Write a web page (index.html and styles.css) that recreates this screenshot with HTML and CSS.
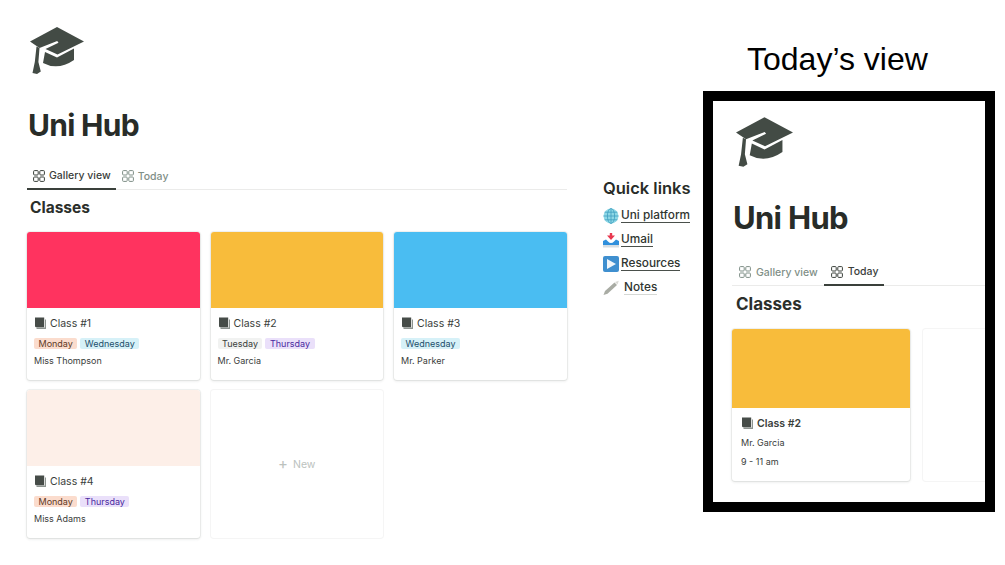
FILE: index.html
```html
<!DOCTYPE html>
<html lang="en">
	<head>
		<meta charset="UTF-8" />
		<title>Uni Hub</title>
		<link rel="stylesheet" href="styles.css">
	</head>
	<body>
		<svg class="defs" width="0" height="0">
			<symbol id="cap" viewBox="0 0 54 47">
				<path d="M27 0L54 14.5 27.5 27.5 15.5 22 28.5 15.8 27.2 14 9.5 21 0 14.5Z" />
				<path d="M15 25L27 30.5 44 21.5V33Q28 44 13 36Z" />
				<path d="M6.5 19.5L9.5 21 8.4 35 10.8 44.5 7 47 2.5 46 4.8 35Z" />
			</symbol>
			<symbol id="grid" viewBox="0 0 12 12">
				<rect x="0.6" y="0.6" width="4.6" height="4.4" rx="0.9" />
				<rect x="6.8" y="0.6" width="4.6" height="4.4" rx="0.9" />
				<rect x="0.6" y="7" width="4.6" height="4.4" rx="0.9" />
				<rect x="6.8" y="7" width="4.6" height="4.4" rx="0.9" />
			</symbol>
			<symbol id="book" viewBox="0 0 12 12">
				<path d="M2.5 10.5H11V2.5H12V12H2.5Z" fill="#8d9490" />
				<path d="M1 .5H10.2V10.2H2.2Q1 10.2 1 9Z" fill="#464c48" />
			</symbol>
		</svg>

		<div class="slide">
			<!-- Gallery page -->
			<main class="page">
				<svg class="cap"><use href="#cap" /></svg>
				<h1>Uni Hub</h1>
				<div class="tabs">
					<div class="tab active"><svg class="grid"><use href="#grid" /></svg>Gallery view</div>
					<div class="tab"><svg class="grid"><use href="#grid" /></svg>Today</div>
				</div>
				<h2>Classes</h2>
				<div class="gallery">
					<div class="card">
						<div class="cover red"></div>
						<div class="card-body">
							<div class="card-title"><svg class="book"><use href="#book" /></svg>Class #1</div>
							<div class="tags"><span class="tag orange">Monday</span><span class="tag blue">Wednesday</span></div>
							<div class="teacher">Miss Thompson</div>
						</div>
					</div>
					<div class="card">
						<div class="cover yellow"></div>
						<div class="card-body">
							<div class="card-title"><svg class="book"><use href="#book" /></svg>Class #2</div>
							<div class="tags"><span class="tag grey">Tuesday</span><span class="tag purple">Thursday</span></div>
							<div class="teacher">Mr. Garcia</div>
						</div>
					</div>
					<div class="card">
						<div class="cover sky"></div>
						<div class="card-body">
							<div class="card-title"><svg class="book"><use href="#book" /></svg>Class #3</div>
							<div class="tags"><span class="tag blue">Wednesday</span></div>
							<div class="teacher">Mr. Parker</div>
						</div>
					</div>
					<div class="card">
						<div class="cover peach"></div>
						<div class="card-body">
							<div class="card-title"><svg class="book"><use href="#book" /></svg>Class #4</div>
							<div class="tags"><span class="tag orange">Monday</span><span class="tag purple">Thursday</span></div>
							<div class="teacher">Miss Adams</div>
						</div>
					</div>
					<div class="card new"><span class="plus">+</span> New</div>
				</div>
			</main>

			<!-- Quick links -->
			<aside class="links">
				<h3>Quick links</h3>
				<div class="link">
					<svg class="emoji" viewBox="0 0 16 16">
						<circle cx="8" cy="8" r="7.5" fill="#8fd8e6" />
						<g fill="none" stroke="#3f9fc0" stroke-width=".8">
							<ellipse cx="8" cy="8" rx="3.6" ry="7.5" />
							<path d="M8 .5V15.5M.5 8H15.5M1.6 4.2H14.4M1.6 11.8H14.4" />
						</g>
					</svg>
					<span>Uni platform</span>
				</div>
				<div class="link">
					<svg class="emoji" viewBox="0 0 16 16">
						<path d="M0 9L3 7.5 5 9.5Q8 12.5 11 9.5L13 7.5 16 9V13H0Z" fill="#2f8fdc" />
						<path d="M0 13H16V15.5H0Z" fill="#d5dde3" />
						<path d="M6.8 1H9.2V3.5H12L8 8 4 3.5H6.8Z" fill="#e8384f" />
					</svg>
					<span>Umail</span>
				</div>
				<div class="link">
					<svg class="emoji" viewBox="0 0 16 16">
						<rect width="16" height="16" rx="2" fill="#3f8fcf" />
						<path d="M4 3L13 8 4 13Z" fill="#f1f6fa" />
					</svg>
					<span>Resources</span>
				</div>
				<div class="link notes">
					<svg class="emoji" viewBox="0 0 16 16">
						<path d="M.5 15L2 11 11.5 2.5 14 5 4.5 13.8Z" fill="#a9aca4" />
						<path d="M12 2L14.5 4.5 15.8 .8Z" fill="#d9d9d4" />
					</svg>
					<span>Notes</span>
				</div>
			</aside>

			<!-- Today's view -->
			<section class="today">
				<div class="today-label">Today’s view</div>
				<div class="frame">
					<svg class="cap"><use href="#cap" /></svg>
					<h1>Uni Hub</h1>
					<div class="tabs">
						<div class="tab"><svg class="grid"><use href="#grid" /></svg>Gallery view</div>
						<div class="tab active"><svg class="grid"><use href="#grid" /></svg>Today</div>
					</div>
					<h2>Classes</h2>
					<div class="today-cards">
						<div class="card">
							<div class="cover yellow"></div>
							<div class="card-body">
								<div class="card-title"><svg class="book"><use href="#book" /></svg>Class #2</div>
								<div class="teacher">Mr. Garcia</div>
								<div class="teacher">9 - 11 am</div>
							</div>
						</div>
						<div class="card blank"></div>
					</div>
				</div>
			</section>
		</div>
	</body>
</html>
```

FILE: styles.css
```css
html,
body {
	margin: 0;
	background: #fff;
}
body {
	width: 1005px;
	height: 565px;
	overflow: hidden;
	font-family: Inter, "Noto Sans", sans-serif;
	color: #2b2f2b;
}
.defs {
	position: absolute;
}
.slide {
	display: flex;
}

/* Gallery page */
.page {
	width: 540px;
	margin-left: 27px;
	padding-top: 27px;
}
.cap {
	display: block;
	width: 54px;
	height: 47px;
	margin-left: 3px;
	fill: #434b45;
}
h1 {
	margin: 32px 0 0 1px;
	font-size: 30px;
	line-height: 38px;
	font-weight: 700;
	letter-spacing: -0.7px;
	color: #282c28;
}
.tabs {
	display: flex;
	height: 26px;
	margin-top: 19px;
	border-bottom: 1px solid #ebebea;
}
.tab {
	display: flex;
	align-items: center;
	gap: 4px;
	height: 26px;
	padding: 0 5px 0 6px;
	font-size: 10.5px;
	font-weight: 500;
	color: #7f8f87;
}
.tab.active {
	height: 25px;
	border-bottom: 2px solid #3a403b;
	color: #3a403b;
}
.grid {
	width: 12px;
	height: 12px;
	fill: none;
	stroke: currentColor;
	stroke-width: 1;
}
h2 {
	margin: 7px 0 0 3px;
	font-size: 15.5px;
	line-height: 22px;
	font-weight: 700;
	color: #2b2f2b;
}
.gallery {
	display: grid;
	grid-template-columns: repeat(3, 172.5px);
	grid-auto-rows: 148px;
	gap: 10px 11px;
	margin-top: 13px;
}
.card {
	display: flex;
	flex-direction: column;
	background: #fff;
	border-radius: 3px;
	overflow: hidden;
	box-shadow: 0 0 0 1px rgba(50, 60, 55, 0.06), 0 1px 3px rgba(50, 60, 55, 0.14);
}
.cover {
	height: 76px;
	flex-shrink: 0;
}
.red {
	background: #ff335f;
}
.yellow {
	background: #f8bc3b;
}
.sky {
	background: #4abdf2;
}
.peach {
	background: #fdefe8;
}
.card-body {
	padding: 8px 7px 0;
}
.card-title {
	display: flex;
	align-items: center;
	gap: 4px;
	height: 14px;
	font-size: 10.5px;
	color: #3a403b;
}
.book {
	width: 12px;
	height: 12px;
}
.tags {
	display: flex;
	gap: 3px;
	margin-top: 8px;
}
.tag {
	padding: 0 4.5px;
	border-radius: 2px;
	font-size: 9px;
	line-height: 11px;
}
.orange {
	background: #fbdccd;
	color: #5e3a26;
}
.blue {
	background: #d6f1f8;
	color: #1d4f6b;
}
.grey {
	background: #f1f2f1;
	color: #3a403b;
}
.purple {
	background: #eae0fa;
	color: #4a2aa0;
}
.teacher {
	margin-top: 6px;
	font-size: 9px;
	line-height: 12px;
	color: #3a403b;
}
.new {
	flex-direction: row;
	align-items: center;
	justify-content: center;
	gap: 5px;
	font-size: 10.5px;
	color: #bcc2be;
	box-shadow: 0 0 0 1px rgba(50, 60, 55, 0.05);
}
.plus {
	font-size: 15px;
	line-height: 14px;
}

/* Quick links */
.links {
	width: 100px;
	margin-left: 36px;
	padding-top: 178px;
}
h3 {
	margin: 0 0 6px;
	font-size: 16.5px;
	line-height: 20px;
	font-weight: 600;
	color: #282c28;
}
.link {
	display: flex;
	align-items: center;
	gap: 2px;
	height: 24px;
	font-size: 11.8px;
	font-weight: 500;
	color: #2f3530;
}
.link span {
	border-bottom: 1px solid #4a504b;
	line-height: 13px;
}
.notes span {
	margin-left: 3px;
	border-bottom-color: #d5d8d5;
}
.emoji {
	width: 16px;
	height: 16px;
	flex-shrink: 0;
}

/* Today's view */
.today {
	width: 292px;
}
.today-label {
	height: 91px;
	margin-left: 44px;
	padding-top: 41px;
	box-sizing: border-box;
	font-family: "Liberation Sans", Arial, sans-serif;
	font-size: 32px;
	line-height: 36px;
	color: #000;
	white-space: nowrap;
}
.frame {
	box-sizing: border-box;
	width: 292px;
	height: 421px;
	padding: 16px 0 0 19px;
	border: 10px solid #000;
	overflow: hidden;
}
.frame .cap {
	width: 57px;
	height: 50px;
	margin-left: 4px;
}
.frame h1 {
	margin: 32px 0 0 1px;
	font-size: 31px;
}
.frame .tabs {
	height: 26px;
	margin-top: 22px;
	width: 260px;
}
.frame .tab {
	gap: 5px;
	padding: 0 6px 0 7px;
}
.frame h2 {
	margin: 7px 0 0 4px;
	font-size: 17px;
}
.today-cards {
	display: flex;
	gap: 13px;
	margin-top: 14px;
}
.today-cards .card {
	width: 178px;
	height: 152px;
	flex-shrink: 0;
}
.today-cards .cover {
	height: 79px;
}
.today-cards .card-body {
	padding: 8px 9px 0;
}
.today-cards .card-title {
	font-weight: 600;
	font-size: 10.5px;
}
.today-cards .teacher {
	margin-top: 7px;
}
.blank {
	box-shadow: 0 0 0 1px rgba(50, 60, 55, 0.05);
}
```
